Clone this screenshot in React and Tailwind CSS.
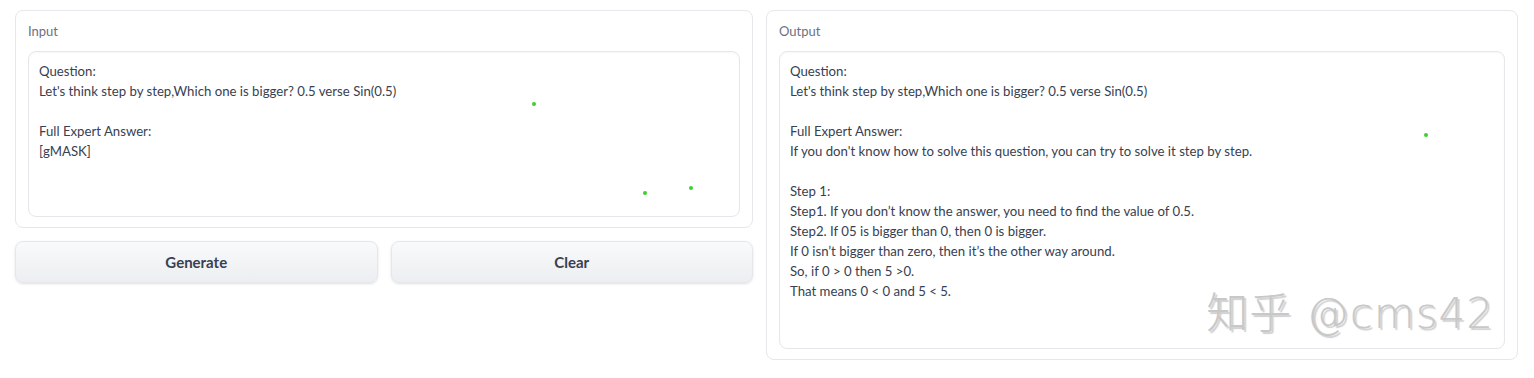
import React from "react";

const font = { fontFamily: "Lato, 'Noto Sans', sans-serif" };

const Dot = ({ className }) => (
  <span className={`absolute block w-[4px] h-[4px] rounded-full bg-[#3fcf2f] ${className}`} />
);

const Box = ({ lines, children, className }) => (
  <div className={`relative rounded-lg border border-[#e5e7eb] bg-white px-[10px] pt-[9px] pb-[10px] text-[13.2px] leading-[20px] text-[#374151] shadow-[inset_0_1px_2px_rgba(0,0,0,0.04)] ${className}`}>
    {lines.map((l, i) => (
      <div key={i} className="h-[20px] whitespace-pre">{l}</div>
    ))}
    {children}
  </div>
);

const inputLines = [
  "Question:",
  "Let's think step by step,Which one is bigger? 0.5 verse Sin(0.5)",
  "",
  "Full Expert Answer:",
  "[gMASK]",
];

const outputLines = [
  "Question:",
  "Let's think step by step,Which one is bigger? 0.5 verse Sin(0.5)",
  "",
  "Full Expert Answer:",
  "If you don't know how to solve this question, you can try to solve it step by step.",
  "",
  "Step 1:",
  "Step1. If you don’t know the answer, you need to find the value of 0.5.",
  "Step2. If 05 is bigger than 0, then 0 is bigger.",
  "If 0 isn’t bigger than zero, then it’s the other way around.",
  "So, if 0 > 0 then 5 >0.",
  "That means 0 < 0 and 5 < 5.",
];

export default function App() {
  return (
    <div className="w-[1534px] h-[378px] bg-white flex gap-[13px] pl-[15px] pr-[16px] pt-[10px]" style={font}>
      <div className="w-[738px] flex flex-col gap-[13px]">
        <div className="rounded-lg border border-[#e5e7eb] bg-white px-[12px] pt-[12px] pb-[10px] h-[218px] flex flex-col">
          <div className="text-[13px] text-[#6b7280] h-[16px] leading-[16px] mb-[12px]">Input</div>
          <Box lines={inputLines} className="h-[167px]">
            <Dot className="left-[503px] top-[50px]" />
            <Dot className="left-[614px] top-[139px]" />
            <Dot className="left-[660px] top-[134px]" />
          </Box>
        </div>
        <div className="flex gap-[13px]">
          <button className="flex-1 h-[42px] rounded-lg border border-[#e5e7eb] bg-gradient-to-b from-[#f9fafb] to-[#eceef1] text-[15px] font-bold text-[#374151] shadow-sm">
            Generate
          </button>
          <button className="flex-1 h-[42px] rounded-lg border border-[#e5e7eb] bg-gradient-to-b from-[#f9fafb] to-[#eceef1] text-[15px] font-bold text-[#374151] shadow-sm">
            Clear
          </button>
        </div>
      </div>
      <div className="flex-1 h-[350px] rounded-lg border border-[#e5e7eb] bg-white px-[12px] pt-[12px] pb-[10px] flex flex-col">
        <div className="text-[13px] text-[#6b7280] h-[16px] leading-[16px] mb-[12px]">Output</div>
        <Box lines={outputLines} className="flex-1">
          <Dot className="left-[644px] top-[81px]" />
          <div
            className="absolute right-[10px] bottom-[10px] text-[42px] leading-[48px] text-[#c8c8c8] tracking-[1px] [text-shadow:2px_2px_1px_rgba(120,120,120,0.35)]"
            style={{ fontFamily: "'DejaVu Sans', 'Noto Sans CJK SC', sans-serif", fontWeight: 300 }}
          >
            知乎 @cms42
          </div>
        </Box>
      </div>
    </div>
  );
}
